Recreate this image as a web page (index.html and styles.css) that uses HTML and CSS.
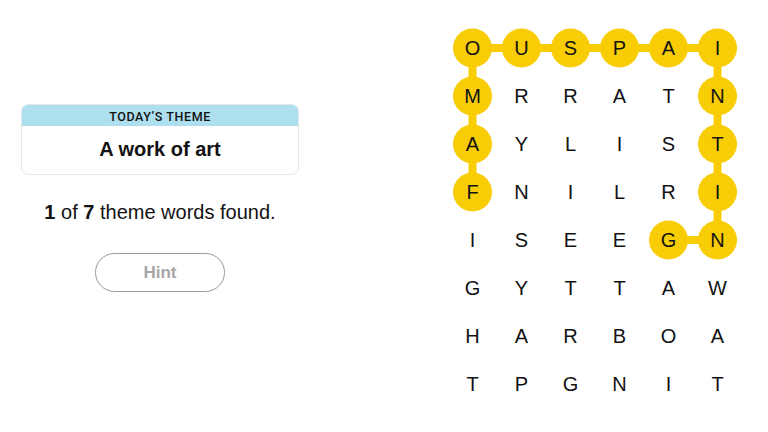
FILE: index.html
```html
<!DOCTYPE html>
<html>
<head>
<meta charset="utf-8">
<link rel="stylesheet" href="styles.css">
</head>
<body>
<main class="page">
  <section class="side">
    <div class="theme-card">
      <div class="theme-head">TODAY’S THEME</div>
      <div class="theme-body">A work of art</div>
    </div>
    <p class="progress"><b>1</b> of <b>7</b> theme words found.</p>
    <button class="hint">Hint</button>
  </section>
  <section class="board">
    <div class="grid">
      <svg class="paths" width="294" height="384" viewBox="0 0 294 384">
        <polyline points="24.5,168 24.5,120 24.5,72 24.5,24 73.5,24 122.5,24 171.5,24 220.5,24 269.5,24 269.5,72 269.5,120 269.5,168 269.5,216 220.5,216" fill="none" stroke="#F8CD05" stroke-width="8" stroke-linejoin="round"/>
        <g fill="#F8CD05">
          <circle cx="24.5" cy="168" r="19.5"/>
          <circle cx="24.5" cy="120" r="19.5"/>
          <circle cx="24.5" cy="72" r="19.5"/>
          <circle cx="24.5" cy="24" r="19.5"/>
          <circle cx="73.5" cy="24" r="19.5"/>
          <circle cx="122.5" cy="24" r="19.5"/>
          <circle cx="171.5" cy="24" r="19.5"/>
          <circle cx="220.5" cy="24" r="19.5"/>
          <circle cx="269.5" cy="24" r="19.5"/>
          <circle cx="269.5" cy="72" r="19.5"/>
          <circle cx="269.5" cy="120" r="19.5"/>
          <circle cx="269.5" cy="168" r="19.5"/>
          <circle cx="269.5" cy="216" r="19.5"/>
          <circle cx="220.5" cy="216" r="19.5"/>
        </g>
      </svg>
      <span>O</span><span>U</span><span>S</span><span>P</span><span>A</span><span>I</span>
      <span>M</span><span>R</span><span>R</span><span>A</span><span>T</span><span>N</span>
      <span>A</span><span>Y</span><span>L</span><span>I</span><span>S</span><span>T</span>
      <span>F</span><span>N</span><span>I</span><span>L</span><span>R</span><span>I</span>
      <span>I</span><span>S</span><span>E</span><span>E</span><span>G</span><span>N</span>
      <span>G</span><span>Y</span><span>T</span><span>T</span><span>A</span><span>W</span>
      <span>H</span><span>A</span><span>R</span><span>B</span><span>O</span><span>A</span>
      <span>T</span><span>P</span><span>G</span><span>N</span><span>I</span><span>T</span>
    </div>
  </section>
</main>
</body>
</html>
```

FILE: styles.css
```css
* { box-sizing: border-box; }
html, body { margin: 0; padding: 0; background: #fff; }
body {
  width: 768px;
  height: 432px;
  overflow: hidden;
  font-family: "Liberation Sans", Arial, sans-serif;
  color: #121212;
}
.page {
  display: flex;
  height: 432px;
}
.side {
  width: 320px;
  padding-top: 104px;
  display: flex;
  flex-direction: column;
  align-items: center;
}
.theme-card {
  width: 278px;
  height: 71px;
  border: 1px solid #e6e6e6;
  border-radius: 7px;
  overflow: hidden;
  display: flex;
  flex-direction: column;
}
.theme-head {
  height: 21px;
  background: #aedfee;
  font-family: Roboto, "Liberation Sans", sans-serif;
  font-weight: 500;
  font-size: 12.5px;
  letter-spacing: 0.6px;
  display: flex;
  align-items: center;
  justify-content: center;
  padding-top: 1px;
}
.theme-body {
  flex: 1;
  display: flex;
  align-items: center;
  justify-content: center;
  font-weight: 700;
  font-size: 20px;
  padding-bottom: 2px;
}
.progress {
  margin: 26px 0 0;
  font-size: 20px;
  line-height: 23px;
}
.hint {
  margin-top: 29px;
  width: 130px;
  height: 39px;
  border: 1px solid #9a9a9a;
  border-radius: 20px;
  background: #fff;
  color: #a6a6a6;
  font-family: "Liberation Sans", Arial, sans-serif;
  font-weight: 700;
  font-size: 17px;
}
.board {
  padding-left: 128px;
  padding-top: 24px;
}
.grid {
  position: relative;
  display: grid;
  grid-template-columns: repeat(6, 49px);
  grid-auto-rows: 48px;
}
.paths {
  position: absolute;
  left: 0;
  top: 0;
}
.grid span {
  position: relative;
  display: flex;
  align-items: center;
  justify-content: center;
  font-size: 20px;
  color: #121212;
}
```
